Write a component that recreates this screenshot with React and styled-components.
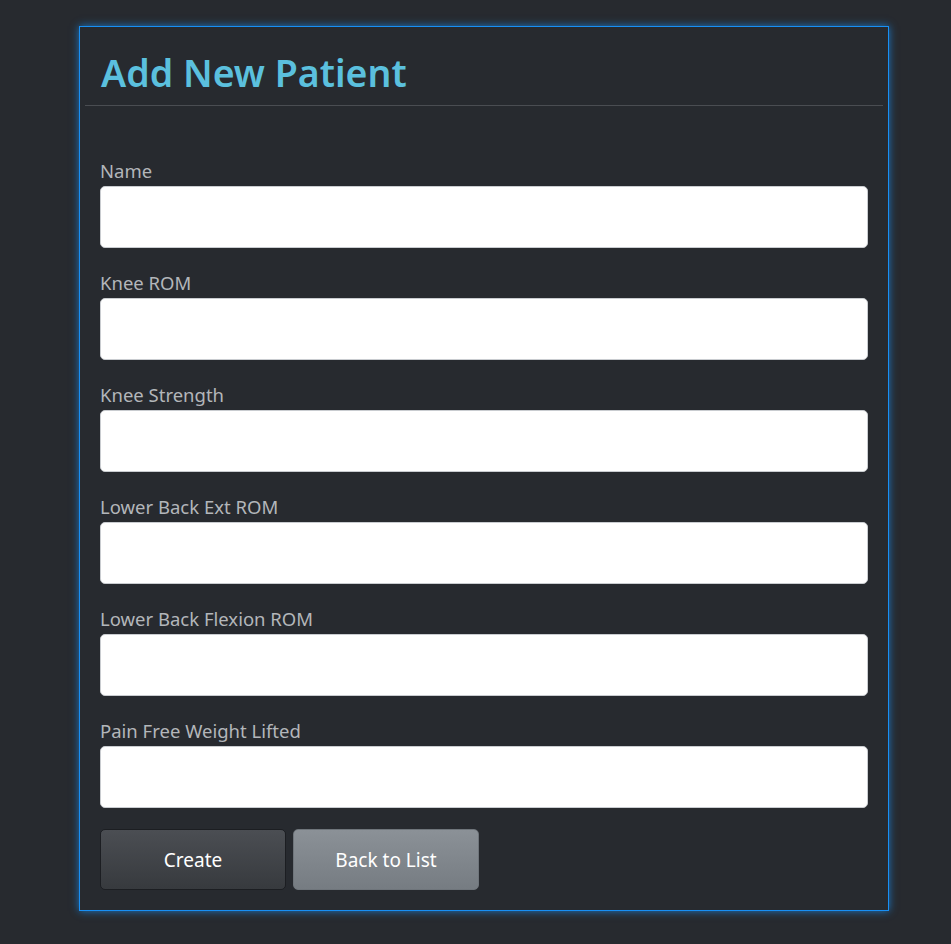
import styled, { createGlobalStyle } from "styled-components";

const GlobalStyle = createGlobalStyle`
  html, body {
    margin: 0;
    padding: 0;
    background-color: #272a2f;
    font-family: "Noto Sans", "Open Sans", sans-serif;
  }
`;

const Page = styled.div`
  padding: 26px 0 34px 79px;
`;

const Card = styled.div`
  width: 810px;
  box-sizing: border-box;
  border: 1px solid #1890f5;
  box-shadow: 0 0 8px rgba(24, 144, 245, 0.75);
  padding: 5px 5px 20px;
`;

const Header = styled.div`
  border-bottom: 1px solid #4a4d52;
  padding: 17px 16px 8px;
`;

const Title = styled.h1`
  margin: 0;
  font-size: 37.5px;
  line-height: 48px;
  font-weight: 600;
  color: #5bc0de;
`;

const Form = styled.form`
  padding: 52px 15px 0;
`;

const Group = styled.div`
  display: flex;
  flex-direction: column;
  margin-bottom: 22px;
`;

const Label = styled.label`
  font-size: 18.5px;
  line-height: 26px;
  color: #b3b6ba;
  margin-bottom: 2px;
`;

const Input = styled.input`
  box-sizing: border-box;
  height: 62px;
  width: 100%;
  border: 1px solid #c9ccd0;
  border-radius: 5px;
  background: #fff;
  font: inherit;
  padding: 0 12px;
`;

const Actions = styled.div`
  display: flex;
  gap: 7px;
  margin-top: -1px;
`;

const Button = styled.button`
  width: 186px;
  height: 61px;
  border-radius: 5px;
  font-family: inherit;
  font-size: 19px;
  color: #fff;
  cursor: pointer;
  border: 1px solid ${(props) => (props.variant === "light" ? "#6f757b" : "#1c1e22")};
  background: ${(props) =>
    props.variant === "light"
      ? "linear-gradient(#8b9197, #767c82)"
      : "linear-gradient(#4b4e53, #373a3e)"};
`;

const fields = [
  "Name",
  "Knee ROM",
  "Knee Strength",
  "Lower Back Ext ROM",
  "Lower Back Flexion ROM",
  "Pain Free Weight Lifted",
];

export default function App() {
  return (
    <>
      <GlobalStyle />
      <Page>
        <Card>
          <Header>
            <Title>Add New Patient</Title>
          </Header>
          <Form onSubmit={(e) => e.preventDefault()}>
            {fields.map((f) => (
              <Group key={f}>
                <Label>{f}</Label>
                <Input type="text" />
              </Group>
            ))}
            <Actions>
              <Button type="submit">Create</Button>
              <Button type="button" variant="light">
                Back to List
              </Button>
            </Actions>
          </Form>
        </Card>
      </Page>
    </>
  );
}
